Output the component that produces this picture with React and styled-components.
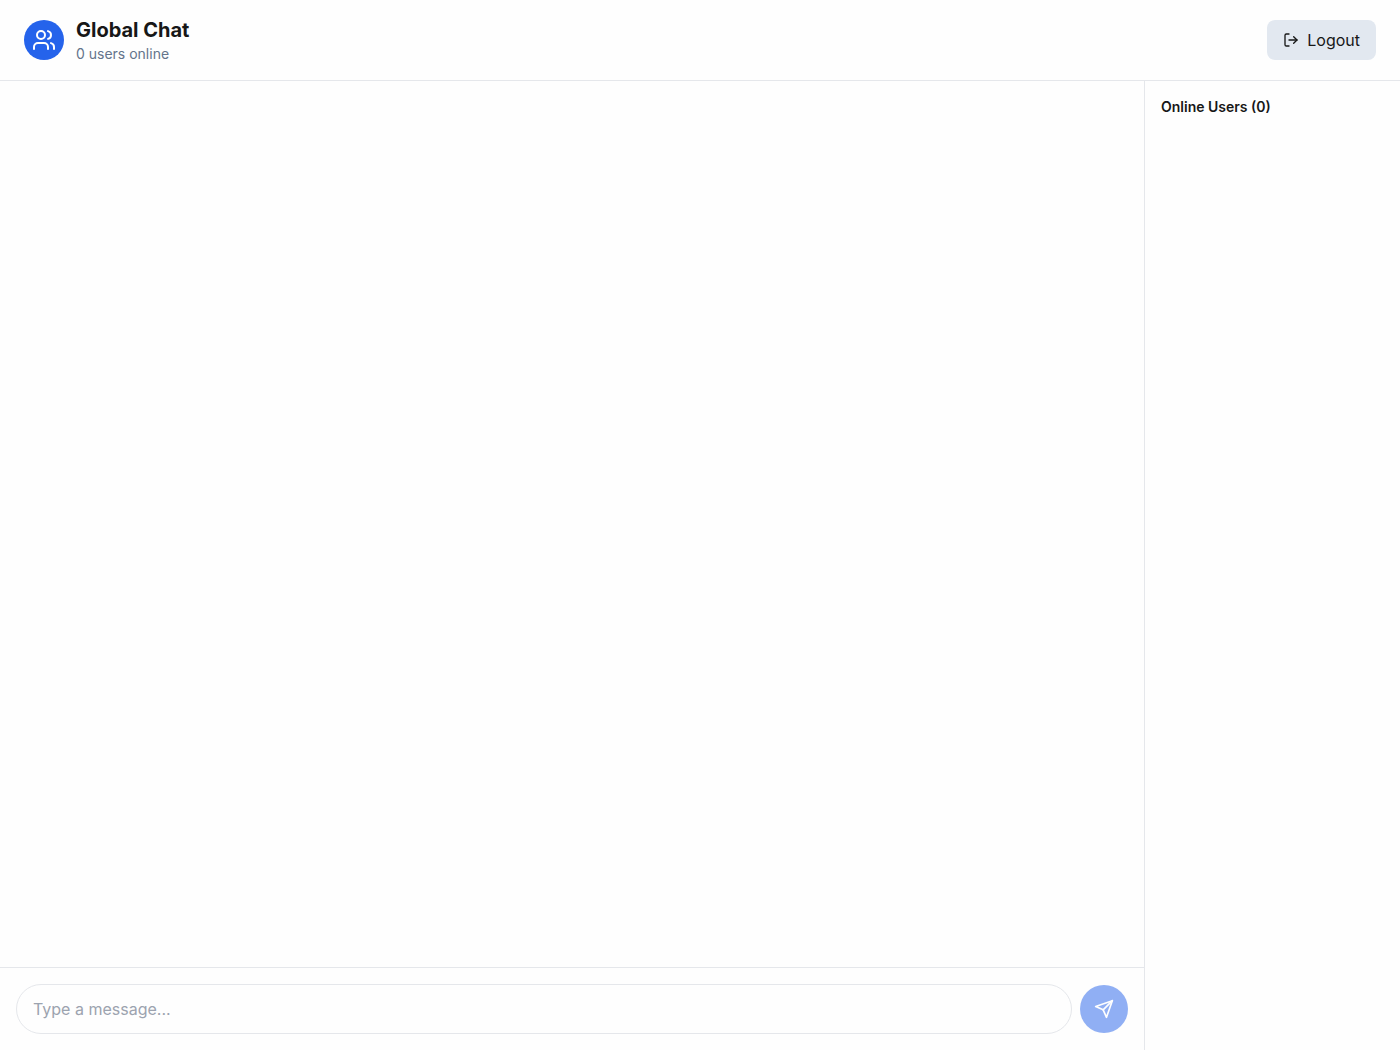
import { useState } from "react";
import styled, { createGlobalStyle } from "styled-components";
import { LogOut, Users } from "lucide-react";

const GlobalStyle = createGlobalStyle`
  *, *::before, *::after {
    box-sizing: border-box;
  }

  body {
    margin: 0;
    background-color: #fefefe;
    color: #171717;
    font-family: Inter, "Liberation Sans", sans-serif;
    font-size: 16px;
    line-height: 24px;
  }

  h1, h2, p {
    margin: 0;
  }

  button, input {
    font: inherit;
  }
`

const Page = styled.div`
  display: flex;
  flex-direction: column;
  height: 100vh;
`

const Header = styled.header`
  display: flex;
  align-items: center;
  justify-content: space-between;
  padding: 16px 24px;
  border-bottom: 1px solid #e5e7eb;
`

const Brand = styled.div`
  display: flex;
  align-items: center;
  gap: 12px;
`

const Avatar = styled.div`
  display: flex;
  align-items: center;
  justify-content: center;
  width: 40px;
  height: 40px;
  border-radius: 50%;
  background-color: #2563eb;
  color: #ffffff;
`

const Title = styled.h1`
  font-size: 20px;
  line-height: 28px;
  font-weight: 700;
`

const Status = styled.p`
  color: #64748b;
  font-size: 14px;
  line-height: 20px;
`

const LogoutButton = styled.button`
  display: flex;
  align-items: center;
  gap: 8px;
  padding: 8px 16px;
  border: none;
  border-radius: 8px;
  background-color: #e2e8f0;
  color: #171717;
  cursor: pointer;
`

const Body = styled.div`
  display: flex;
  flex: 1;
  min-height: 0;
`

const Chat = styled.main`
  display: flex;
  flex: 1;
  flex-direction: column;
  min-width: 0;
`

const Messages = styled.div`
  flex: 1;
  overflow-y: auto;
  padding: 16px;
`

const Composer = styled.form`
  display: flex;
  align-items: center;
  gap: 8px;
  padding: 16px;
  border-top: 1px solid #e5e7eb;
`

const MessageInput = styled.input`
  flex: 1;
  min-width: 0;
  padding: 12px 16px;
  border: 1px solid #e5e7eb;
  border-radius: 25px;
  outline: none;
  background-color: transparent;
  color: #171717;

  &::placeholder {
    color: #9ca3af;
  }
`

const SendButton = styled.button`
  display: flex;
  align-items: center;
  justify-content: center;
  width: 48px;
  height: 48px;
  padding: 0;
  border: none;
  border-radius: 50%;
  background-color: #2563eb;
  color: #ffffff;
  cursor: pointer;

  &:disabled {
    opacity: 0.5;
    cursor: not-allowed;
  }
`

const Sidebar = styled.aside`
  width: 256px;
  padding: 16px;
  border-left: 1px solid #e5e7eb;
`

const SidebarTitle = styled.h2`
  font-size: 14px;
  line-height: 20px;
  font-weight: 600;
`

function SendIcon() {
  return (
    <svg
      width="20"
      height="20"
      viewBox="0 0 24 24"
      fill="none"
      stroke="currentColor"
      strokeWidth="2"
      strokeLinecap="round"
      strokeLinejoin="round"
      aria-hidden="true"
    >
      <path d="m22 2-7 20-4-9-9-4Z" />
      <path d="M22 2 11 13" />
    </svg>
  );
}

function App() {
  const [message, setMessage] = useState("");
  const users = [];

  const handleSubmit = (e) => {
    e.preventDefault();
    setMessage("");
  };

  return (
    <Page>
      <GlobalStyle />
      <Header>
        <Brand>
          <Avatar>
            <Users size={24} />
          </Avatar>
          <div>
            <Title>Global Chat</Title>
            <Status>{`${users.length} users online`}</Status>
          </div>
        </Brand>
        <LogoutButton type="button">
          <LogOut size={16} />
          Logout
        </LogoutButton>
      </Header>
      <Body>
        <Chat>
          <Messages />
          <Composer onSubmit={handleSubmit}>
            <MessageInput
              type="text"
              aria-label="Message"
              placeholder="Type a message..."
              value={message}
              onChange={(e) => setMessage(e.target.value)}
            />
            <SendButton type="submit" aria-label="Send" disabled={!message.trim()}>
              <SendIcon />
            </SendButton>
          </Composer>
        </Chat>
        <Sidebar>
          <SidebarTitle>{`Online Users (${users.length})`}</SidebarTitle>
        </Sidebar>
      </Body>
    </Page>
  );
}

export default App;
